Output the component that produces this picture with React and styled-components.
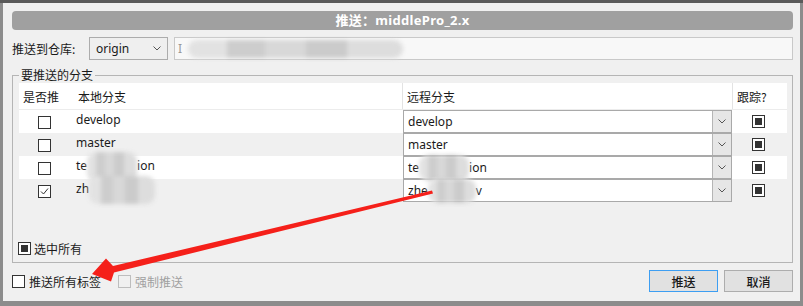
import React from "react";
import styled, { createGlobalStyle } from "styled-components";

const GlobalStyle = createGlobalStyle`
  html, body {
    margin: 0;
    padding: 0;
  }
  body {
    background: #8c8c8c;
    font-family: "Noto Sans", "Noto Sans CJK SC", sans-serif;
    font-size: 12px;
    color: #1a1a1a;
  }
`;

const Screen = styled.div`
  position: relative;
  width: 803px;
  height: 306px;
  box-sizing: border-box;
  padding: 3px 3px 5px 3px;
  background: linear-gradient(#5a5a5a 0 3px, #8c8c8c 3px);
  overflow: hidden;
`;

const Dialog = styled.div`
  height: 100%;
  box-sizing: border-box;
  background: #f0f0f0;
  padding: 8px 7px 0 9px;
  display: flex;
  flex-direction: column;
`;

const TitleBar = styled.div`
  height: 19px;
  line-height: 19px;
  border-radius: 4px;
  background: #a0a0a0;
  color: #fff;
  font-weight: 700;
  font-size: 13px;
  letter-spacing: 0.3px;
  text-align: center;
  font-family: "Noto Sans", "Noto Sans CJK SC", sans-serif;
`;

const RepoRow = styled.div`
  margin-top: 7px;
  height: 23px;
  display: flex;
  align-items: center;
`;

const Label = styled.span`
  width: 77px;
  font-family: "Noto Sans CJK SC", sans-serif;
`;

const Select = styled.div`
  width: 79px;
  height: 23px;
  box-sizing: border-box;
  border: 1px solid #acacac;
  background: #efefef;
  display: flex;
  align-items: center;
  justify-content: space-between;
  padding: 0 6px 0 6px;
`;

const Input = styled.div`
  flex: 1;
  margin-left: 6px;
  height: 23px;
  box-sizing: border-box;
  border: 1px solid #c9c9c9;
  background: #f8f8f8;
  display: flex;
  align-items: center;
  padding-left: 3px;
  color: #999;
`;

/* mosaic used where the screenshot was blurred; negative margins keep it out of the line height */
const Hidden = styled.span`
  display: inline-block;
  width: ${(p) => p.$w}px;
  height: ${(p) => p.$h}px;
  margin: ${(p) => -(p.$h - 14) / 2}px 0;
  vertical-align: middle;
  background: linear-gradient(
    90deg,
    #e2e2e2 0 18%,
    #cdcdcd 18% 36%,
    #d8d8d8 36% 55%,
    #cbcbcb 55% 74%,
    #dddddd 74% 100%
  );
  border-radius: 9px;
  filter: blur(2px);
`;

const Group = styled.fieldset`
  margin: 7px 0 0 0;
  min-width: 0;
  border: 1px solid #b5b5b5;
  padding: 0 5px 7px 6px;
`;

const Legend = styled.legend`
  padding: 0 2px;
  line-height: 16px;
  font-family: "Noto Sans CJK SC", sans-serif;
`;

const Table = styled.div`
  display: flex;
  flex-direction: column;
`;

const columns = "55px 328px 330px 55px";

const HeaderRow = styled.div`
  display: grid;
  grid-template-columns: ${columns};
  height: 26px;
  background: #fff;
  border-bottom: 1px solid #ececec;
  font-family: "Noto Sans CJK SC", sans-serif;
`;

const HeadCell = styled.div`
  display: flex;
  align-items: center;
  padding-left: 4px;
  border-left: ${(p) => (p.$divider ? "1px solid #e3e3e3" : "none")};
`;

const Row = styled.div`
  display: grid;
  grid-template-columns: ${columns};
  height: 23px;
  background: ${(p) => (p.$alt ? "#f0f0f0" : "#fff")};
`;

const CheckCell = styled.div`
  display: flex;
  align-items: center;
  padding: 2px 0 0 19px;
`;

const NameCell = styled.div`
  padding: 1px 0 0 2px;
  line-height: 18px;
  height: 22px;
  box-sizing: border-box;
  white-space: nowrap;
`;

const ComboCell = styled.div`
  padding-left: 1px;
`;

const Combo = styled.div`
  height: 23px;
  box-sizing: border-box;
  border: 1px solid #a9a9a9;
  background: #fff;
  display: flex;
  align-items: stretch;
`;

const ComboText = styled.span`
  flex: 1;
  display: flex;
  align-items: center;
  padding-left: 4px;
  white-space: nowrap;
`;

const ComboButton = styled.span`
  width: 18px;
  border-left: 1px solid #b5b5b5;
  background: #e6e6e6;
  display: flex;
  align-items: center;
  justify-content: center;
`;

const TrackCell = styled.div`
  display: flex;
  align-items: center;
  justify-content: center;
  padding-right: 3px;
`;

const Check = styled.span`
  box-sizing: border-box;
  flex: none;
  width: 13px;
  height: 13px;
  display: inline-flex;
  align-items: center;
  justify-content: center;
  border: 1px solid ${(p) => (p.$disabled ? "#bdbdbd" : "#333")};
  background: ${(p) => (p.$disabled ? "#f0f0f0" : "#fff")};
`;

const Fill = styled.span`
  width: 7px;
  height: 7px;
  background: #333;
`;

const SelectAll = styled.label`
  margin-top: 40px;
  display: flex;
  align-items: center;
  gap: 3px;
  height: 13px;
  margin-left: -1px;
  font-family: "Noto Sans CJK SC", sans-serif;
`;

const Footer = styled.div`
  margin-top: 7px;
  height: 22px;
  display: flex;
  align-items: center;
  font-family: "Noto Sans CJK SC", sans-serif;
`;

const Option = styled.label`
  display: flex;
  align-items: center;
  gap: 4px;
  margin-right: 17px;
  color: ${(p) => (p.$disabled ? "#a0a0a0" : "#1a1a1a")};
`;

const Spacer = styled.div`
  flex: 1;
`;

const Button = styled.button`
  width: 69px;
  height: 22px;
  box-sizing: border-box;
  margin-left: 6px;
  padding: 0;
  border: 1px solid ${(p) => (p.$primary ? "#3d9ef2" : "#adadad")};
  background: #e1e1e1;
  color: #1a1a1a;
  font-family: "Noto Sans CJK SC", sans-serif;
  font-size: 12px;
  font-weight: 500;
`;

const Overlay = styled.svg`
  position: absolute;
  left: 0;
  top: 0;
  pointer-events: none;
`;

const Chevron = () => (
  <svg width="8" height="5" viewBox="0 0 8 5">
    <polyline points="0.5,0.5 4,4 7.5,0.5" fill="none" stroke="#555" strokeWidth="1" />
  </svg>
);

const Tick = () => (
  <svg width="9" height="9" viewBox="0 0 9 9">
    <polyline points="1,4.5 3.5,7 8,1.5" fill="none" stroke="#333" strokeWidth="1" />
  </svg>
);

const branches = [
  { local: <>develop</>, remote: <>develop</>, pushed: false },
  { local: <>master</>, remote: <>master</>, pushed: false },
  {
    local: <>te<Hidden $w={50} $h={30} />ion</>,
    remote: <>te<Hidden $w={50} $h={26} />ion</>,
    pushed: false,
  },
  {
    local: <>zh<Hidden $w={66} $h={28} /></>,
    remote: <>zhe<Hidden $w={48} $h={24} />v</>,
    pushed: true,
  },
];

const App = () => {
  return (
    <>
      <GlobalStyle />
      <Screen>
        <Dialog>
          <TitleBar>推送：middlePro_2.x</TitleBar>
          <RepoRow>
            <Label>推送到仓库:</Label>
            <Select>
              <span>origin</span>
              <Chevron />
            </Select>
            <Input>
              <span>I</span>
              <Hidden $w={215} $h={18} style={{ marginLeft: 6 }} />
            </Input>
          </RepoRow>
          <Group>
            <Legend>要推送的分支</Legend>
            <Table>
              <HeaderRow>
                <HeadCell>是否推</HeadCell>
                <HeadCell>本地分支</HeadCell>
                <HeadCell $divider>远程分支</HeadCell>
                <HeadCell $divider>跟踪?</HeadCell>
              </HeaderRow>
              {branches.map((b, i) => (
                <Row key={i} $alt={i % 2 === 1}>
                  <CheckCell>
                    <Check>{b.pushed && <Tick />}</Check>
                  </CheckCell>
                  <NameCell>{b.local}</NameCell>
                  <ComboCell>
                    <Combo>
                      <ComboText>{b.remote}</ComboText>
                      <ComboButton>
                        <Chevron />
                      </ComboButton>
                    </Combo>
                  </ComboCell>
                  <TrackCell>
                    <Check>
                      <Fill />
                    </Check>
                  </TrackCell>
                </Row>
              ))}
            </Table>
            <SelectAll>
              <Check>
                <Fill />
              </Check>
              选中所有
            </SelectAll>
          </Group>
          <Footer>
            <Option>
              <Check />
              推送所有标签
            </Option>
            <Option $disabled>
              <Check $disabled />
              强制推送
            </Option>
            <Spacer />
            <Button $primary>推送</Button>
            <Button>取消</Button>
          </Footer>
        </Dialog>
        <Overlay width="803" height="306" viewBox="0 0 803 306">
          <polygon
            points="432,190.5 113,266 106,258.5 92,274 111,281.5 114,272.5 433,193.5"
            fill="#f5201a"
          />
        </Overlay>
      </Screen>
    </>
  );
};

export default App;
